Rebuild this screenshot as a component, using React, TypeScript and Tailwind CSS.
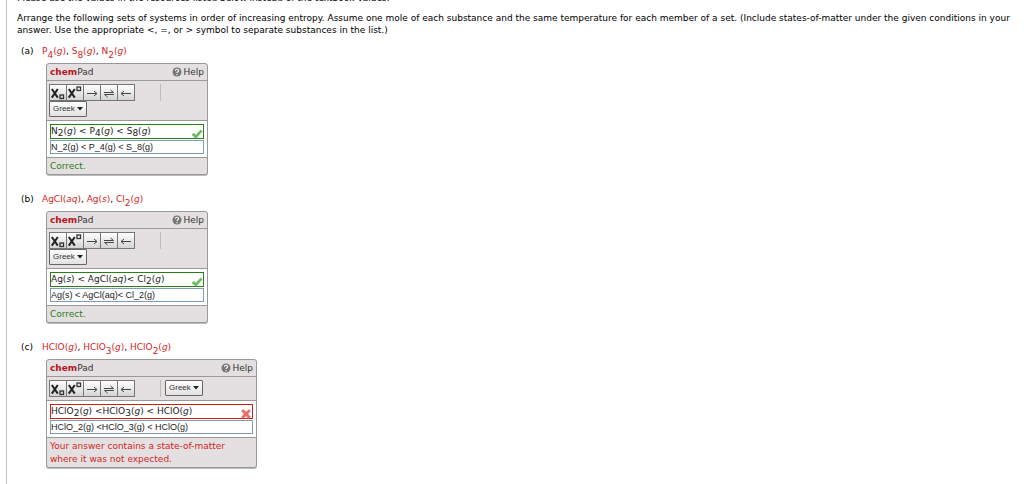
import type { ReactNode } from "react";

type Problem = {
  id: string;
  substances: ReactNode;
  preview: ReactNode;
  answer: string;
  correct: boolean;
  feedback: string;
  panelWidth: string;
};

const Sub = ({ children }: { children: ReactNode }) => (
  <sub className="bottom-0 align-[-4px] text-[9px] leading-none">{children}</sub>
);

const SmallSub = ({ children }: { children: ReactNode }) => (
  <sub className="bottom-0 align-[-2px] text-[9px] leading-none">{children}</sub>
);

const Red = ({ children }: { children: ReactNode }) => (
  <span className="text-[#d3261c]">{children}</span>
);

const problems: Problem[] = [
  {
    id: "a",
    substances: (
      <>
        <Red>P<Sub>4</Sub>(<i>g</i>)</Red>, <Red>S<Sub>8</Sub>(<i>g</i>)</Red>, <Red>N<Sub>2</Sub>(<i>g</i>)</Red>
      </>
    ),
    preview: (
      <>
        N<SmallSub>2</SmallSub>(<i>g</i>) &lt; P<SmallSub>4</SmallSub>(<i>g</i>) &lt; S<SmallSub>8</SmallSub>(<i>g</i>)
      </>
    ),
    answer: "N_2(g) < P_4(g) < S_8(g)",
    correct: true,
    feedback: "Correct.",
    panelWidth: "w-[162px]",
  },
  {
    id: "b",
    substances: (
      <>
        <Red>AgCl(<i>aq</i>)</Red>, <Red>Ag(<i>s</i>)</Red>, <Red>Cl<Sub>2</Sub>(<i>g</i>)</Red>
      </>
    ),
    preview: (
      <>
        Ag(<i>s</i>) &lt; AgCl(<i>aq</i>)&lt; Cl<SmallSub>2</SmallSub>(<i>g</i>)
      </>
    ),
    answer: "Ag(s) < AgCl(aq)< Cl_2(g)",
    correct: true,
    feedback: "Correct.",
    panelWidth: "w-[162px]",
  },
  {
    id: "c",
    substances: (
      <>
        <Red>HClO(<i>g</i>)</Red>, <Red>HClO<Sub>3</Sub>(<i>g</i>)</Red>, <Red>HClO<Sub>2</Sub>(<i>g</i>)</Red>
      </>
    ),
    preview: (
      <>
        HClO<SmallSub>2</SmallSub>(<i>g</i>) &lt;HClO<SmallSub>3</SmallSub>(<i>g</i>) &lt; HClO(<i>g</i>)
      </>
    ),
    answer: "HClO_2(g) <HClO_3(g) < HClO(g)",
    correct: false,
    feedback: "Your answer contains a state-of-matter where it was not expected.",
    panelWidth: "w-[211px]",
  },
];

const LetterX = () => <path d="M1.8 4l6 8.6M7.8 4l-6 8.6" stroke="#222" strokeWidth="2" fill="none" />;

const SubscriptIcon = () => (
  <svg viewBox="0 0 16 16" className="size-4" aria-hidden="true">
    <LetterX />
    <rect x="10" y="10" width="3.5" height="3.5" fill="none" stroke="#333" strokeWidth="1.3" />
  </svg>
);

const SuperscriptIcon = () => (
  <svg viewBox="0 0 16 16" className="size-4" aria-hidden="true">
    <LetterX />
    <rect x="10" y="2" width="3.5" height="3.5" fill="none" stroke="#333" strokeWidth="1.3" />
  </svg>
);

const RightIcon = () => (
  <svg viewBox="0 0 16 16" className="size-4" fill="none" stroke="#444" aria-hidden="true">
    <path d="M3 8.5h10M10 6l3 2.5L10 11" />
  </svg>
);

const EquilibriumIcon = () => (
  <svg viewBox="0 0 16 16" className="size-4" fill="none" stroke="#444" aria-hidden="true">
    <path d="M3 7.5h9.5L9.5 5M13 9.5H3.5l3 2.5" />
  </svg>
);

const LeftIcon = () => (
  <svg viewBox="0 0 16 16" className="size-4" fill="none" stroke="#444" aria-hidden="true">
    <path d="M13 8.5H3M6 6L3 8.5L6 11" />
  </svg>
);

const tools = [
  { label: "Subscript", Icon: SubscriptIcon },
  { label: "Superscript", Icon: SuperscriptIcon },
  { label: "Reaction arrow", Icon: RightIcon },
  { label: "Equilibrium arrow", Icon: EquilibriumIcon },
  { label: "Left arrow", Icon: LeftIcon },
];

const HelpIcon = () => (
  <svg viewBox="0 0 10 10" className="size-[10px]" aria-hidden="true">
    <circle cx="5" cy="5" r="4.5" fill="#777" />
    <path d="M3.4 3.8c0-2 3.2-2 3.2-.1C6.6 4.8 5 4.8 5 6M5 7v1.2" stroke="#fff" strokeWidth="1.1" fill="none" />
  </svg>
);

const CheckIcon = () => (
  <svg viewBox="0 0 12 12" className="size-3" aria-label="Correct" role="img">
    <path d="M1 6.8l2-1.6 1.7 2L9.6 2l1.6 1.2L5 10.6z" fill="#6cba62" stroke="#5aa653" strokeWidth=".5" />
  </svg>
);

const CrossIcon = () => (
  <svg viewBox="0 0 12 12" className="size-3" aria-label="Incorrect" role="img">
    <path
      d="M1.5 3L3.3 1.5 6 4.3 8.8 1.5 10.5 3 7.8 6l2.7 3-1.7 1.5L6 7.8 3.3 10.5 1.5 9l2.7-3z"
      fill="#ea7068"
      stroke="#dd554c"
      strokeWidth=".5"
    />
  </svg>
);

function ChemPad({ problem }: { problem: Problem }) {
  const { correct, preview, answer, feedback, panelWidth, id } = problem;
  return (
    <section className={`${panelWidth} rounded-[3px] border border-[#999] bg-[#e4e0e1] shadow-[0_1px_0_#bbb]`}>
      <header className="flex h-4 items-center justify-between px-[3px] text-[#333]">
        <h2>
          <b className="text-[#b8141f]">chem</b>Pad
        </h2>
        <a href="#help" className="flex items-center gap-px">
          <HelpIcon />
          Help
        </a>
      </header>

      <div className="flex flex-wrap gap-x-1 border-y border-[#999] py-[3px] pr-3 pl-[2px]">
        <div className="flex w-28 border-r border-[#c0bcbd]">
          {tools.map(({ label, Icon }) => (
            <button
              key={label}
              type="button"
              aria-label={label}
              className="-mr-px flex h-[17px] w-[18px] items-center justify-center border border-[#777] bg-linear-to-b from-white to-[#d4d4d4]"
            >
              <Icon />
            </button>
          ))}
        </div>
        <div className="relative">
          <select
            aria-label="Greek letters"
            className="block h-4 w-[38px] appearance-none rounded-[1px] border border-[#666] bg-linear-to-b from-white to-[#e2e2e2] pl-[3px] font-['Liberation_Sans',sans-serif] text-[8px] text-[#333]"
          >
            <option>Greek</option>
          </select>
          <svg viewBox="0 0 6 4" className="pointer-events-none absolute top-[6px] right-[4px] h-1 w-[6px]" aria-hidden="true">
            <path d="M0 0h6L3 3.5z" fill="#222" />
          </svg>
        </div>
      </div>

      <div className="flex flex-col gap-px bg-white p-[3px] text-[#222]">
        <div
          className={`flex h-[15px] items-center justify-between border ${correct ? "border-[#2c7d1c]" : "border-[#cc1f1a]"}`}
        >
          <span className="whitespace-nowrap">{preview}</span>
          <span className="pt-1">{correct ? <CheckIcon /> : <CrossIcon />}</span>
        </div>
        <input
          type="text"
          aria-label={`Answer for part ${id}`}
          defaultValue={answer}
          className="h-[14px] w-full border border-[#7f9db9] bg-white font-['Liberation_Sans',sans-serif] text-[9px]"
        />
      </div>

      <p
        className={`border-t border-[#999] px-[3px] pt-[2px] pb-px leading-[13px] ${correct ? "text-[#2c7d1c]" : "text-[#d3261c]"}`}
      >
        {feedback}
      </p>
    </section>
  );
}

export default function App() {
  return (
    <div className="min-h-screen bg-white pl-[6px]">
      <main className="min-h-screen overflow-hidden border-l border-[#c4c4c4] pr-3 pl-[10px] font-['DejaVu_Sans',Verdana,sans-serif] text-[9px] leading-3 text-black">
        <p className="-mt-2">
          Please use the values in the resources listed below instead of the textbook values.
        </p>
        <p className="mt-2">
          Arrange the following sets of systems in order of increasing entropy. Assume one mole of each substance and the
          same temperature for each member of a set. (Include states-of-matter under the given conditions in your answer.
          Use the appropriate &lt;, =, or &gt; symbol to separate substances in the list.)
        </p>
        <ol className="mt-[9px] flex flex-col gap-[18px] pl-1">
          {problems.map((problem) => (
            <li key={problem.id} className="flex">
              <span className="w-[21px] shrink-0">({problem.id})</span>
              <div>
                <p className="h-3 whitespace-nowrap">{problem.substances}</p>
                <div className="mt-[6px] pl-1">
                  <ChemPad problem={problem} />
                </div>
              </div>
            </li>
          ))}
        </ol>
      </main>
    </div>
  );
}
